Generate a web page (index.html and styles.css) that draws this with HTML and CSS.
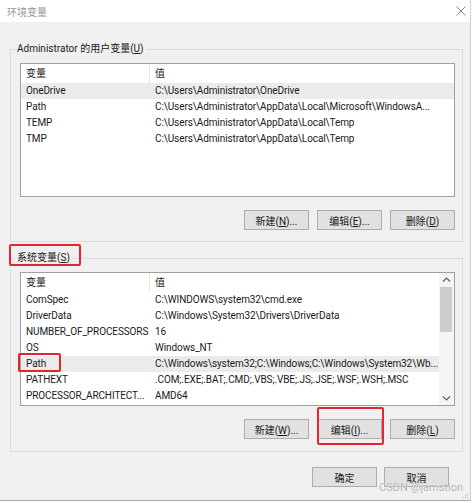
FILE: index.html
```html
<!DOCTYPE html>
<html lang="zh-CN">
<head>
    <meta charset="UTF-8">
    <meta name="viewport" content="width=device-width, initial-scale=1.0">
    <title>环境变量</title>
    <link rel="stylesheet" href="styles.css">
</head>
<body>
    <div class="window">
        <div class="titlebar">
            <span class="title">环境变量</span>
            <svg class="close" width="10" height="10" viewBox="0 0 10 10">
                <path d="M0.5 0.5 L9.5 9.5 M9.5 0.5 L0.5 9.5" stroke="#8a8a8a" stroke-width="1" fill="none"/>
            </svg>
        </div>

        <div class="dialog">
            <fieldset class="group">
                <legend>Administrator 的用户变量(<u>U</u>)</legend>
                <div class="list">
                    <div class="rows">
                        <div class="row head"><span>变量</span><span>值</span></div>
                        <div class="row selected"><span>OneDrive</span><span>C:\Users\Administrator\OneDrive</span></div>
                        <div class="row"><span>Path</span><span>C:\Users\Administrator\AppData\Local\Microsoft\WindowsA...</span></div>
                        <div class="row"><span>TEMP</span><span>C:\Users\Administrator\AppData\Local\Temp</span></div>
                        <div class="row"><span>TMP</span><span>C:\Users\Administrator\AppData\Local\Temp</span></div>
                    </div>
                </div>
                <div class="actions">
                    <button>新建(<u>N</u>)...</button>
                    <button>编辑(<u>E</u>)...</button>
                    <button>删除(<u>D</u>)</button>
                </div>
            </fieldset>

            <fieldset class="group">
                <legend><span class="mark mark-legend">系统变量(<u>S</u>)</span></legend>
                <div class="list">
                    <div class="rows">
                        <div class="row head"><span>变量</span><span>值</span></div>
                        <div class="row"><span>ComSpec</span><span>C:\WINDOWS\system32\cmd.exe</span></div>
                        <div class="row"><span>DriverData</span><span>C:\Windows\System32\Drivers\DriverData</span></div>
                        <div class="row"><span>NUMBER_OF_PROCESSORS</span><span>16</span></div>
                        <div class="row"><span>OS</span><span>Windows_NT</span></div>
                        <div class="row selected"><span class="open"><span class="mark mark-path">Path</span></span><span>C:\Windows\system32;C:\Windows;C:\Windows\System32\Wb...</span></div>
                        <div class="row"><span>PATHEXT</span><span>.COM;.EXE;.BAT;.CMD;.VBS;.VBE;.JS;.JSE;.WSF;.WSH;.MSC</span></div>
                        <div class="row"><span>PROCESSOR_ARCHITECT...</span><span>AMD64</span></div>
                    </div>
                    <div class="scrollbar">
                        <svg class="arrow" width="15" height="14" viewBox="0 0 15 14">
                            <path d="M4 8.5 L7.5 5 L11 8.5" stroke="#606060" stroke-width="1.2" fill="none"/>
                        </svg>
                        <div class="thumb"></div>
                        <div class="track"></div>
                        <svg class="arrow" width="15" height="14" viewBox="0 0 15 14">
                            <path d="M4 5.5 L7.5 9 L11 5.5" stroke="#606060" stroke-width="1.2" fill="none"/>
                        </svg>
                    </div>
                </div>
                <div class="actions">
                    <button>新建(<u>W</u>)...</button>
                    <button class="mark mark-btn">编辑(<u>I</u>)...</button>
                    <button>删除(<u>L</u>)</button>
                </div>
            </fieldset>

            <div class="footer">
                <button>确定</button>
                <button>取消</button>
            </div>

            <span class="watermark">CSDN @jamstion</span>
            <svg class="grip" width="7" height="7" viewBox="0 0 7 7">
                <rect x="5" y="1" width="1" height="1" fill="#b5b5b5"/>
                <rect x="3" y="3" width="1" height="1" fill="#b5b5b5"/>
                <rect x="5" y="3" width="1" height="1" fill="#b5b5b5"/>
                <rect x="1" y="5" width="1" height="1" fill="#b5b5b5"/>
                <rect x="3" y="5" width="1" height="1" fill="#b5b5b5"/>
                <rect x="5" y="5" width="1" height="1" fill="#b5b5b5"/>
            </svg>
        </div>
    </div>
</body>
</html>
```

FILE: styles.css
```css
body {
    margin: 0;
    padding: 0;
    background-color: #ffffff;
    font-family: Roboto, "Noto Sans CJK SC", sans-serif;
    font-size: 10px;
    color: #1a1a1a;
}

.window {
    width: 470px;
    height: 500px;
    border-right: 1px solid #cfcfcf;
    border-bottom: 1px solid #a8a8a8;
    display: flex;
    flex-direction: column;
}

.titlebar {
    height: 22px;
    background-color: #ffffff;
    display: flex;
    align-items: center;
    justify-content: space-between;
    padding: 0 4px 0 7px;
}

.title {
    color: #999999;
    font-size: 10px;
}

.dialog {
    flex: 1;
    position: relative;
    background-color: #f0f0f0;
    padding-top: 19px;
}

.group {
    margin: 0 7px 0 10px;
    padding: 0 7px 11px 9px;
    border: 1px solid #dcdcdc;
    min-width: 0;
}

.group + .group {
    margin-top: 8px;
    padding-bottom: 12px;
}

.group legend {
    margin-left: -5px;
    padding: 0 2px;
    line-height: 16px;
    height: 16px;
}

.list {
    margin-top: 6px;
    height: 132px;
    background-color: #ffffff;
    border: 1px solid #a0a0a0;
    display: flex;
}

.rows {
    flex: 1;
    min-width: 0;
}

.row {
    display: grid;
    grid-template-columns: 129px 1fr;
    height: 16px;
    line-height: 16px;
    letter-spacing: -0.1px;
}

.row > span {
    padding-left: 5px;
    white-space: nowrap;
    overflow: hidden;
}

.row > span.open {
    overflow: visible;
}

.row.head {
    height: 19px;
    line-height: 19px;
}

.row.head span:first-child {
    border-right: 1px solid #e5e5e5;
}

.row.selected {
    background-color: #ebebeb;
}

.scrollbar {
    width: 15px;
    display: flex;
    flex-direction: column;
    background-color: #f4f4f4;
}

.arrow {
    display: block;
}

.thumb {
    height: 45px;
    margin: 0 2px 0 1px;
    background-color: #cdcdcd;
}

.track {
    flex: 1;
}

.actions {
    margin-top: 13px;
    display: flex;
    justify-content: flex-end;
    gap: 8px;
}

button {
    width: 65px;
    height: 20px;
    padding: 0;
    background-color: #e1e1e1;
    border: 1px solid #adadad;
    border-radius: 0;
    font-family: Roboto, "Noto Sans CJK SC", sans-serif;
    font-size: 10px;
    color: #1a1a1a;
}

.footer {
    margin-top: 15px;
    display: flex;
    justify-content: flex-end;
    gap: 7px;
    padding-right: 21px;
}

/* red highlight boxes drawn over the screenshot */
.mark {
    position: relative;
}

.mark::after {
    content: "";
    position: absolute;
    border: 2px solid #e3262a;
    border-radius: 2px;
}

.mark-legend::after {
    top: -8px;
    bottom: -3px;
    left: -8px;
    right: -11px;
}

.mark-path {
    display: inline-block;
    line-height: 16px;
}

.mark-path::after {
    top: -3px;
    bottom: 0;
    left: -8px;
    right: -15px;
}

.mark-btn::after {
    top: -13px;
    bottom: -7px;
    left: -1px;
    right: -3px;
}

.watermark {
    position: absolute;
    right: 7px;
    bottom: 6px;
    font-family: Roboto, sans-serif;
    font-size: 11px;
    color: #b4b4b4;
    text-shadow: 0 0 1px #ffffff;
}

.grip {
    position: absolute;
    right: 1px;
    bottom: 1px;
}
```
